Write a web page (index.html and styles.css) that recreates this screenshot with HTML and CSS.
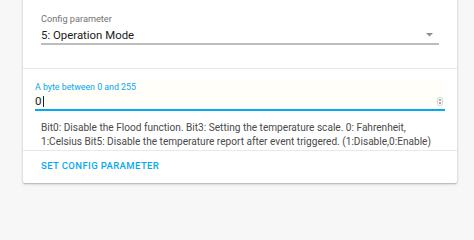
FILE: index.html
```html
<!DOCTYPE html>
<html lang="en">
<head>
<meta charset="utf-8">
<title>Config parameter</title>
<link rel="stylesheet" href="styles.css">
</head>
<body>
<div class="page">
  <div class="card">
    <div class="select-section">
      <div class="field-label">Config parameter</div>
      <div class="select-row">
        <span class="select-value">5: Operation Mode</span>
        <svg class="arrow" width="7" height="4" viewBox="0 0 7 4"><path d="M0 0h7L3.5 3.6z" fill="#8c8c8c"/></svg>
      </div>
    </div>
    <div class="input-section">
      <div class="input-field">
        <div class="field-label focused">A byte between 0 and 255</div>
        <div class="input-row">
          <span class="input-value">0<span class="caret"></span></span>
          <svg class="spinner" width="6" height="9" viewBox="0 0 6 9"><rect x="0.5" y="0.5" width="5" height="8" rx="1.5" fill="#fff" stroke="#d6d6d6"/><path d="M1.6 3.6h2.8L3 1.8z" fill="#666"/><path d="M1.6 5.4h2.8L3 7.2z" fill="#666"/></svg>
        </div>
      </div>
      <p class="help">Bit0: Disable the Flood function. Bit3: Setting the temperature scale. 0: Fahrenheit, 1:Celsius Bit5: Disable the temperature report after event triggered. (1:Disable,0:Enable)</p>
    </div>
    <div class="card-actions">
      <span class="button">Set config parameter</span>
    </div>
  </div>
</div>
</body>
</html>
```
FILE: styles.css
```css
html, body {
  margin: 0;
  padding: 0;
  background: #f7f7f7;
  font-family: Roboto, "Liberation Sans", sans-serif;
}
.page {
  padding: 0 17px 0 23px;
  overflow: hidden;
  height: 208px;
}
.card {
  width: 434px;
  margin-top: -10px;
  background: #fff;
  border-radius: 2px;
  box-shadow: 0 1px 3px rgba(0,0,0,0.22), 0 1px 1px rgba(0,0,0,0.12);
}
.select-section {
  padding: 23px 18px 23px 18px;
}
.field-label {
  font-size: 9.2px;
  line-height: 12px;
  color: #737373;
}
.field-label.focused {
  font-size: 8.8px;
  color: #03a9f4;
}
.select-row {
  margin-top: 3px;
  display: flex;
  align-items: center;
  justify-content: space-between;
  border-bottom: 2px solid #bdbdbd;
  height: 15px;
}
.select-value {
  font-size: 11.4px;
  line-height: 15px;
  color: #212121;
}
.arrow {
  margin-right: 6px;
  margin-bottom: 1px;
}
.input-section {
  border-top: 1px solid #e8e8e8;
  padding: 12px 12px 1px 12px;
}
.input-field {
  background: #fffef8;
}
.input-row {
  display: flex;
  align-items: center;
  justify-content: space-between;
  height: 16px;
  border-bottom: 2px solid #03a9f4;
}
.input-value {
  font-size: 11.6px;
  line-height: 16px;
  color: #212121;
  display: flex;
  align-items: center;
}
.caret {
  display: inline-block;
  width: 1px;
  height: 11px;
  background: #212121;
  margin-left: 1px;
}
.spinner {
  margin-right: 2px;
}
.help {
  margin: 10px 0 0 0;
  padding: 0 6px;
  font-size: 10.1px;
  line-height: 14px;
  color: #4a4a4a;
}
.card-actions {
  border-top: 1px solid #e8e8e8;
  padding: 9px 18px 11px 18px;
}
.button {
  display: block;
  font-size: 9.5px;
  line-height: 12px;
  font-weight: 500;
  letter-spacing: 0.4px;
  text-transform: uppercase;
  color: #03a9f4;
}
```
